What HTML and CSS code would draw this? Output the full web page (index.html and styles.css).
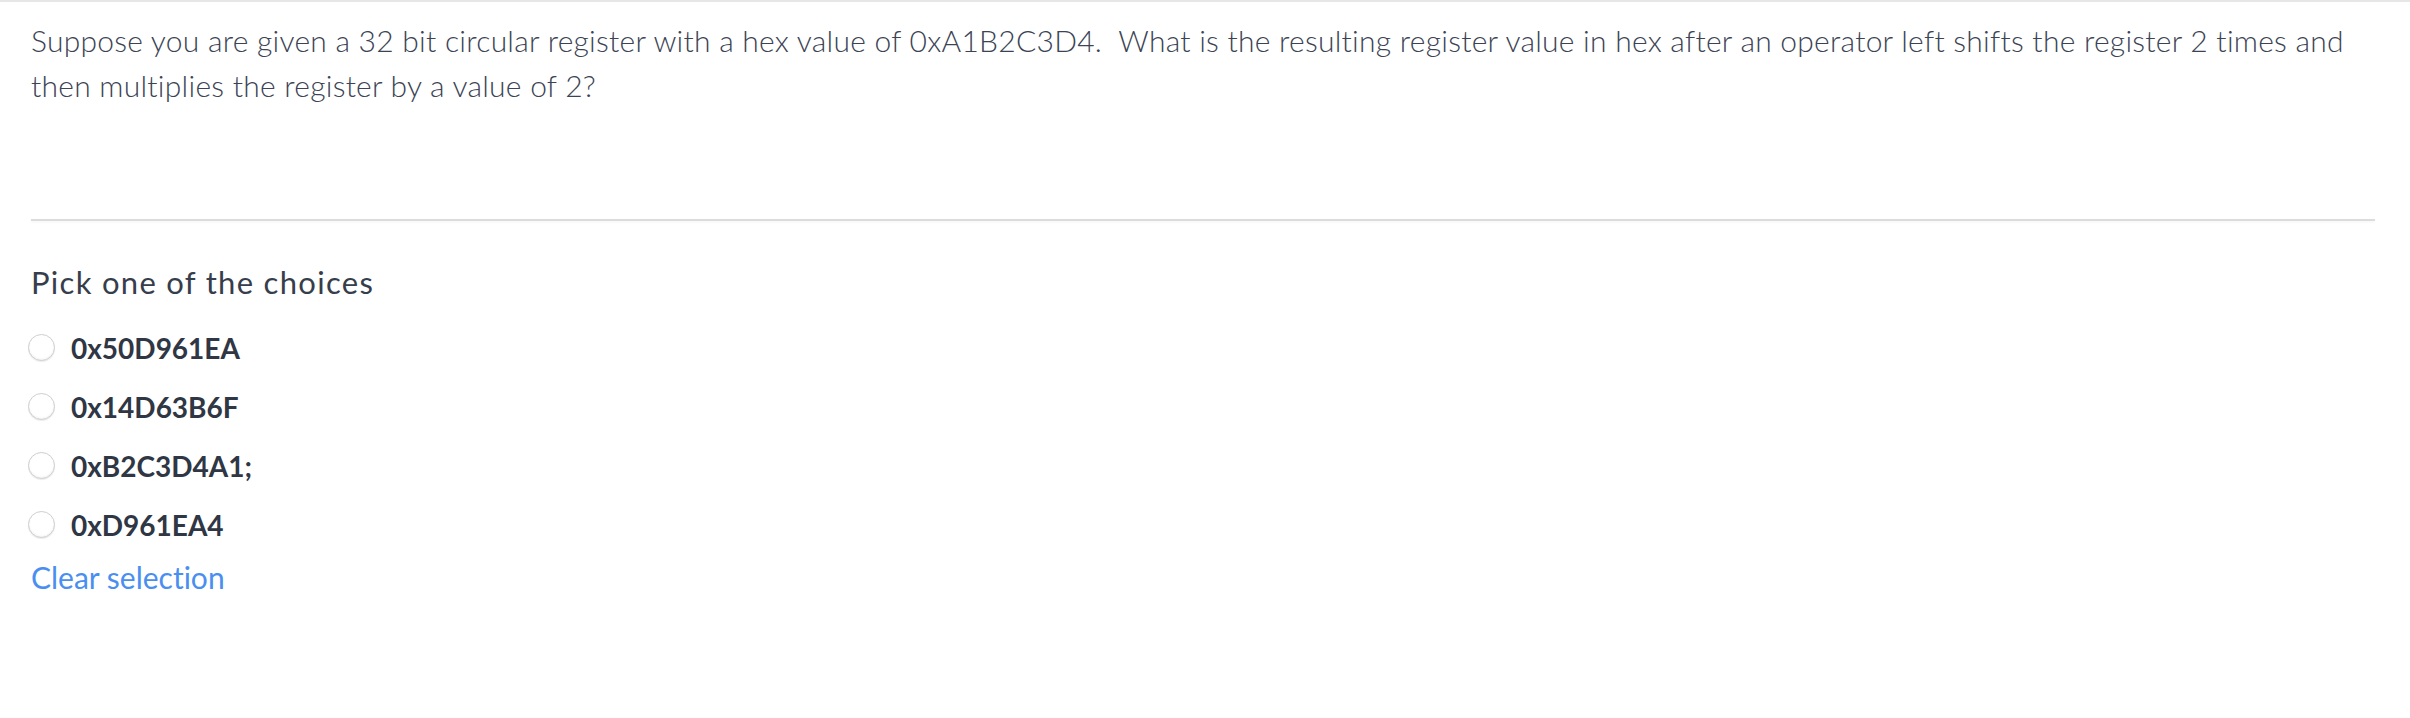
FILE: index.html
```html
<!DOCTYPE html>
<html lang="en">
<head>
    <meta charset="UTF-8">
    <title>Question</title>
    <link rel="stylesheet" href="styles.css">
</head>
<body>

    <div class="question">
        <p class="prompt">Suppose you are given a 32 bit circular register with a hex value of 0xA1B2C3D4.&nbsp; What is the resulting register value in hex after an operator left shifts the register 2 times and then multiplies the register by a value of 2?</p>
        <hr class="divider">
        <h2 class="choices-title">Pick one of the choices</h2>
        <div class="choices">
            <label class="choice"><input type="radio" name="answer"><span>0x50D961EA</span></label>
            <label class="choice"><input type="radio" name="answer"><span>0x14D63B6F</span></label>
            <label class="choice"><input type="radio" name="answer"><span>0xB2C3D4A1;</span></label>
            <label class="choice"><input type="radio" name="answer"><span>0xD961EA4</span></label>
        </div>
        <a href="#" class="clear-link">Clear selection</a>
    </div>

</body>
</html>
```

FILE: styles.css
```css
body {
    font-family: Lato, "Open Sans", sans-serif;
    font-variant-ligatures: none;
    margin: 0;
    padding: 0;
    background: #fff;
    color: #3b4354;
    border-top: 2px solid #e6e6e6;
}
.question {
    padding: 16px 35px 0 31px;
}
.prompt {
    margin: 0;
    font-size: 30px;
    font-weight: 300;
    line-height: 45px;
    letter-spacing: 0.25px;
    color: #3b4354;
}
.divider {
    margin: 111px 0 0;
    border: none;
    height: 2px;
    background: #dcdcdc;
    box-shadow: 0 1px 3px rgba(0, 0, 0, 0.05);
}
.choices-title {
    margin: 39px 0 13px;
    font-size: 31px;
    font-weight: 400;
    line-height: 45px;
    letter-spacing: 1.3px;
    color: #363d4b;
}
.choice {
    display: flex;
    align-items: center;
    height: 59px;
    font-size: 28px;
    font-weight: 700;
    color: #2f3644;
    cursor: pointer;
}
.choice input {
    appearance: none;
    -webkit-appearance: none;
    width: 27px;
    height: 27px;
    margin: 0 16px 0 -3px;
    border: 1px solid #cfcfcf;
    border-radius: 50%;
    background: #fff;
    box-shadow: inset 0 -1px 2px rgba(0, 0, 0, 0.06), 0 1px 1px rgba(0, 0, 0, 0.08);
}
.clear-link {
    display: inline-block;
    margin-top: 1px;
    font-size: 30px;
    line-height: 45px;
    color: #4a8ff0;
    text-decoration: none;
}
```
